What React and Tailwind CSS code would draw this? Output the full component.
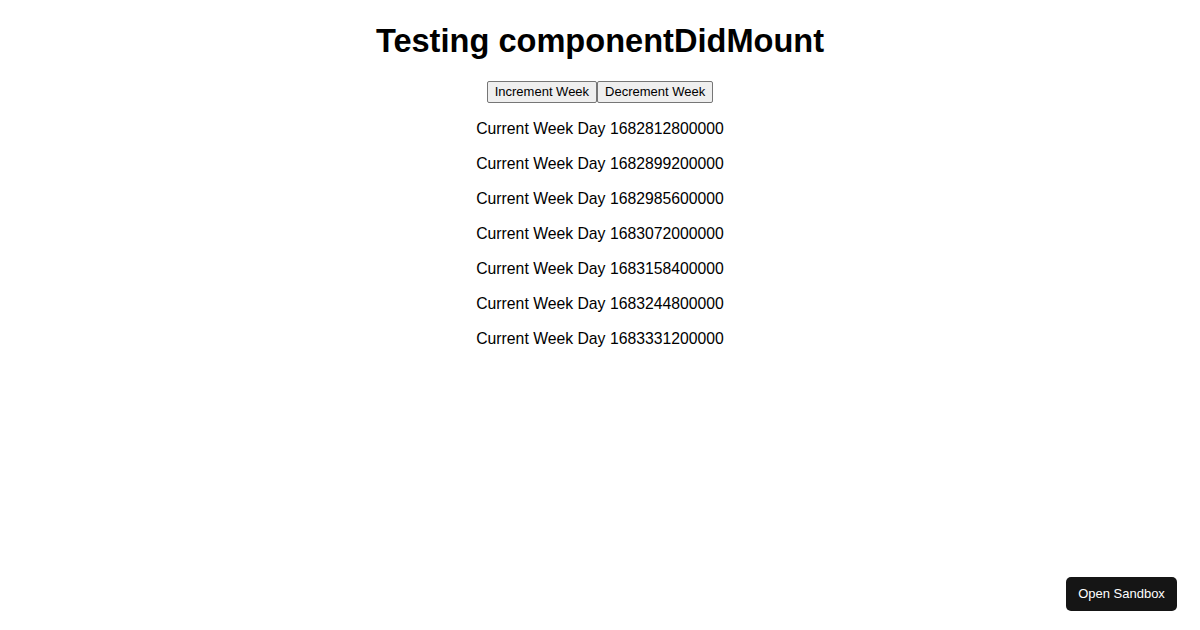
import { useState } from 'react'

const START = 1682812800000
const DAY = 86400000

export default function App() {
  const [week, setWeek] = useState(0)
  const days = Array.from({ length: 7 }, (_, i) => START + week * 7 * DAY + i * DAY)

  return (
    <div className="relative min-h-[630px] bg-white text-black font-['Liberation_Sans',Arial,sans-serif]">
      <div className="text-center">
        <h1 className="pt-[22px] text-[32.6px] leading-[37px] font-bold">Testing componentDidMount</h1>
        <div className="mt-[22px] flex justify-center">
          <button
            onClick={() => setWeek((w) => w + 1)}
            className="h-[22px] rounded-[2px] border border-[#767676] bg-[#efefef] px-[7px] text-[13px] leading-[18px]"
          >
            Increment Week
          </button>
          <button
            onClick={() => setWeek((w) => w - 1)}
            className="h-[22px] rounded-[2px] border border-[#767676] bg-[#efefef] px-[7px] text-[13px] leading-[18px]"
          >
            Decrement Week
          </button>
        </div>
        {days.map((d) => (
          <p key={d} className="mt-[16px] text-[15.75px] leading-[19px]">
            Current Week Day {d}
          </p>
        ))}
      </div>

      <button className="absolute right-[23px] bottom-[19px] h-[34px] w-[111px] rounded-[5px] bg-[#151515] text-[13px] text-white">
        Open Sandbox
      </button>
    </div>
  )
}
